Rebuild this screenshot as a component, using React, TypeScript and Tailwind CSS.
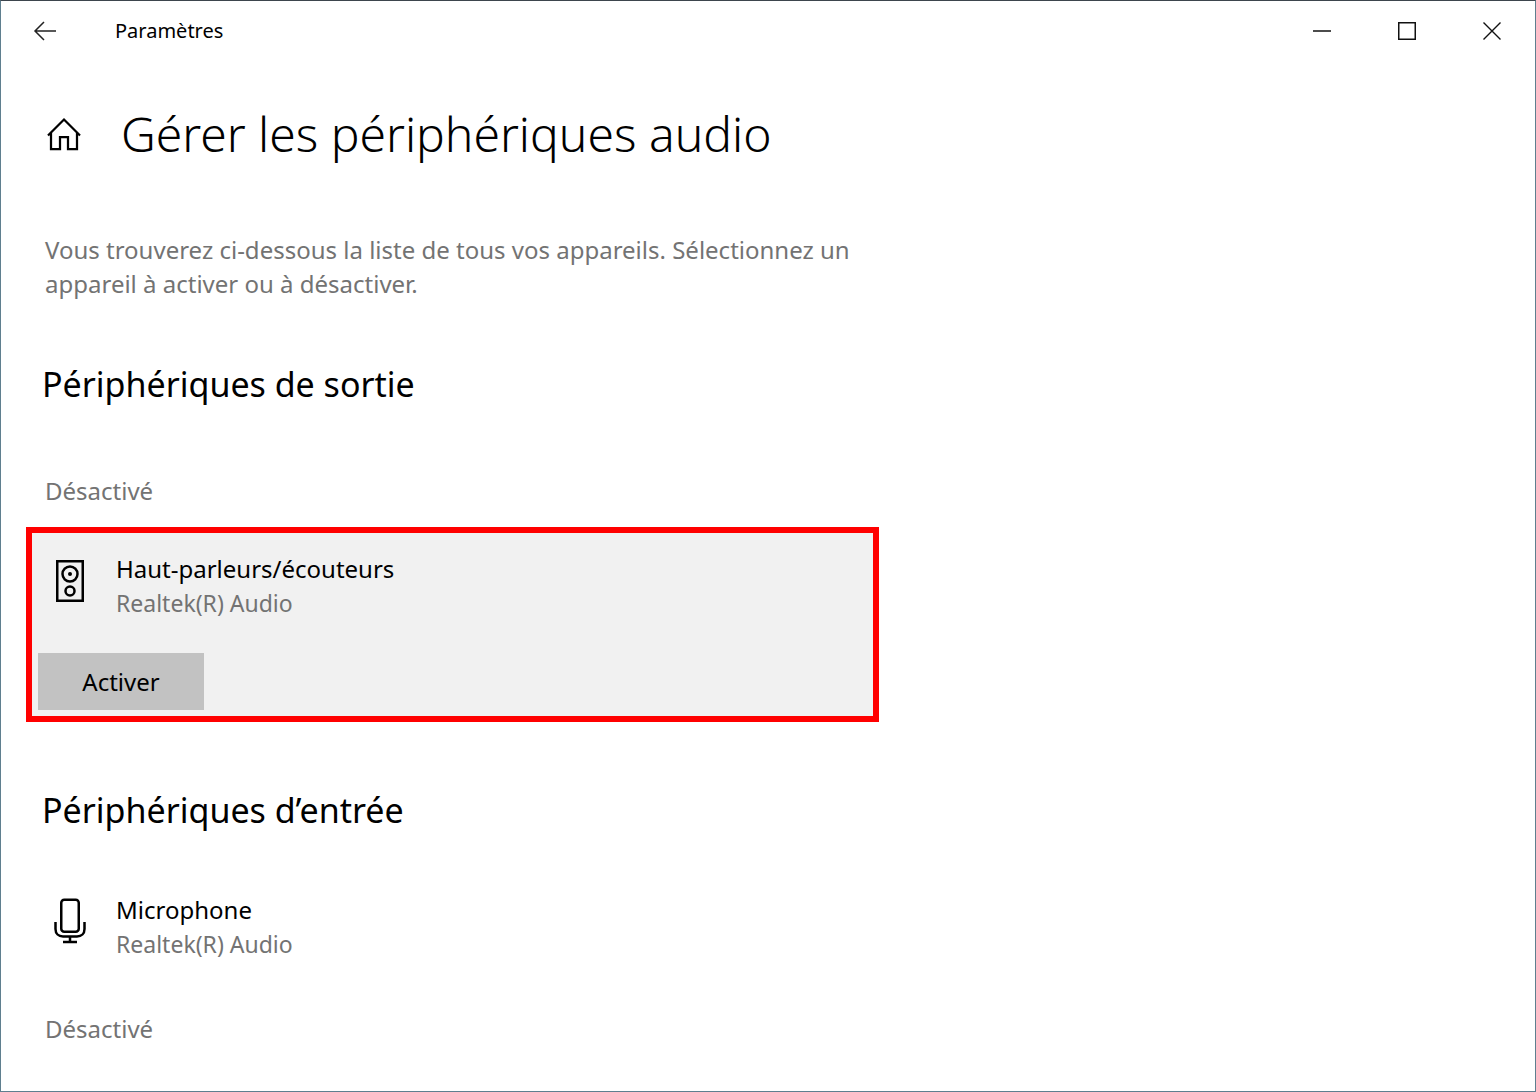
interface AudioDevice {
  name: string;
  driver: string;
  kind: 'speaker' | 'microphone';
}

const outputDevice: AudioDevice = {
  name: 'Haut-parleurs/écouteurs',
  driver: 'Realtek(R) Audio',
  kind: 'speaker'
};

const inputDevice: AudioDevice = {
  name: 'Microphone',
  driver: 'Realtek(R) Audio',
  kind: 'microphone'
};

const BackIcon = () => (
  <svg width="24" height="20" viewBox="0 0 24 20" fill="none" stroke="#222" strokeWidth="1.5">
    <path d="M23 10H2M11 1L2 10L11 19" />
  </svg>
);

const HomeIcon = () => (
  <svg width="34" height="34" viewBox="0 0 34 34" fill="none" stroke="#000" strokeWidth="2.25">
    <path d="M1 18.5L17 2.5L33 18.5" />
    <path d="M4 16V32H13V20H21V32H30V16" />
  </svg>
);

const SpeakerIcon = () => (
  <svg width="28" height="46" viewBox="0 -3 28 46" fill="none" stroke="#000" strokeWidth="2.5">
    <rect x="1.25" y="1.25" width="25.5" height="39.5" />
    <circle cx="14" cy="14" r="7.5" />
    <circle cx="14" cy="14" r="2" fill="#000" stroke="none" />
    <circle cx="14" cy="31" r="4.5" />
  </svg>
);

const MicrophoneIcon = () => (
  <svg width="32" height="46" viewBox="0 0 32 46" fill="none" stroke="#000" strokeWidth="2.5">
    <rect x="7.25" y="1.75" width="17.5" height="32" rx="3" />
    <path d="M1.5 24V31C1.5 35.5 4.5 38.5 9 38.5H23C27.5 38.5 30.5 35.5 30.5 31V24" />
    <path d="M16 38.5V44M9 44H23" />
  </svg>
);

// Minimize, maximize and close
const WindowControls = () => {
  const buttonClass = 'flex w-[85px] items-center justify-center hover:bg-gray-200';

  return (
    <div className="flex pr-px">
      <button type="button" aria-label="Réduire" className={buttonClass}>
        <svg width="18" height="18" viewBox="0 0 18 18" stroke="#111" strokeWidth="1.5">
          <path d="M0 9H18" />
        </svg>
      </button>
      <button type="button" aria-label="Agrandir" className={buttonClass}>
        <svg width="18" height="18" viewBox="0 0 18 18" fill="none" stroke="#111" strokeWidth="1.5">
          <rect x="0.75" y="0.75" width="16.5" height="16.5" />
        </svg>
      </button>
      <button type="button" aria-label="Fermer" className={buttonClass}>
        <svg width="18" height="18" viewBox="0 0 18 18" stroke="#111" strokeWidth="1.4">
          <path d="M0.5 0.5L17.5 17.5M17.5 0.5L0.5 17.5" />
        </svg>
      </button>
    </div>
  );
};

const DeviceInfo = ({ device }: { device: AudioDevice }) => (
  <div className="flex items-start">
    <div className="flex w-8 shrink-0 justify-center pt-[5px]">
      {device.kind === 'speaker' ? <SpeakerIcon /> : <MicrophoneIcon />}
    </div>
    <div className="ml-[30px]">
      <h3 className="text-[24px] leading-[34px]">{device.name}</h3>
      <p className="text-[23px] leading-[34px] text-[#737373]">{device.driver}</p>
    </div>
  </div>
);

const App = () => {
  return (
    <div className="min-h-screen border border-t-[#3d454d] border-[#5f7f8f] bg-white font-['Noto_Sans','Open_Sans',sans-serif] text-black">
      <header className="flex h-[59px] justify-between">
        <div className="flex items-center">
          <button type="button" aria-label="Retour" className="flex h-full w-[88px] items-center justify-center">
            <BackIcon />
          </button>
          <span className="ml-[26px] text-[20px]">Paramètres</span>
        </div>
        <WindowControls />
      </header>

      <main className="max-w-[878px] pb-11 pl-[25px]">
        <div className="mt-[42px] flex items-center pl-[21px]">
          <a href="#accueil" aria-label="Accueil">
            <HomeIcon />
          </a>
          <h1 className="ml-10 text-[48px] leading-[64px] font-[350] whitespace-nowrap">
            Gérer les périphériques audio
          </h1>
        </div>

        <p className="mt-[67px] pl-[19px] text-[24px] leading-[34px] text-[#737373]">
          Vous trouverez ci-dessous la liste de tous vos appareils. Sélectionnez un appareil à activer ou à désactiver.
        </p>

        <section>
          <h2 className="mt-[59px] pl-4 text-[34px] leading-[48px]">Périphériques de sortie</h2>
          <p className="mt-[66px] pl-[19px] text-[24px] leading-[34px] text-[#737373]">Désactivé</p>
          <div className="mt-[19px] border-6 border-[#ff0000] bg-[#f1f1f1] px-1.5 pt-[19px] pb-1.5">
            <div className="pl-4">
              <DeviceInfo device={outputDevice} />
            </div>
            <button type="button" className="mt-[33px] block h-[57px] w-[166px] bg-[#c2c2c2] text-[24px]">
              Activer
            </button>
          </div>
        </section>

        <section>
          <h2 className="mt-16 pl-4 text-[34px] leading-[48px]">Périphériques d’entrée</h2>
          <div className="mt-[59px] pl-7">
            <DeviceInfo device={inputDevice} />
          </div>
          <p className="mt-[51px] pl-[19px] text-[24px] leading-[34px] text-[#737373]">Désactivé</p>
        </section>
      </main>
    </div>
  );
};

export default App;
